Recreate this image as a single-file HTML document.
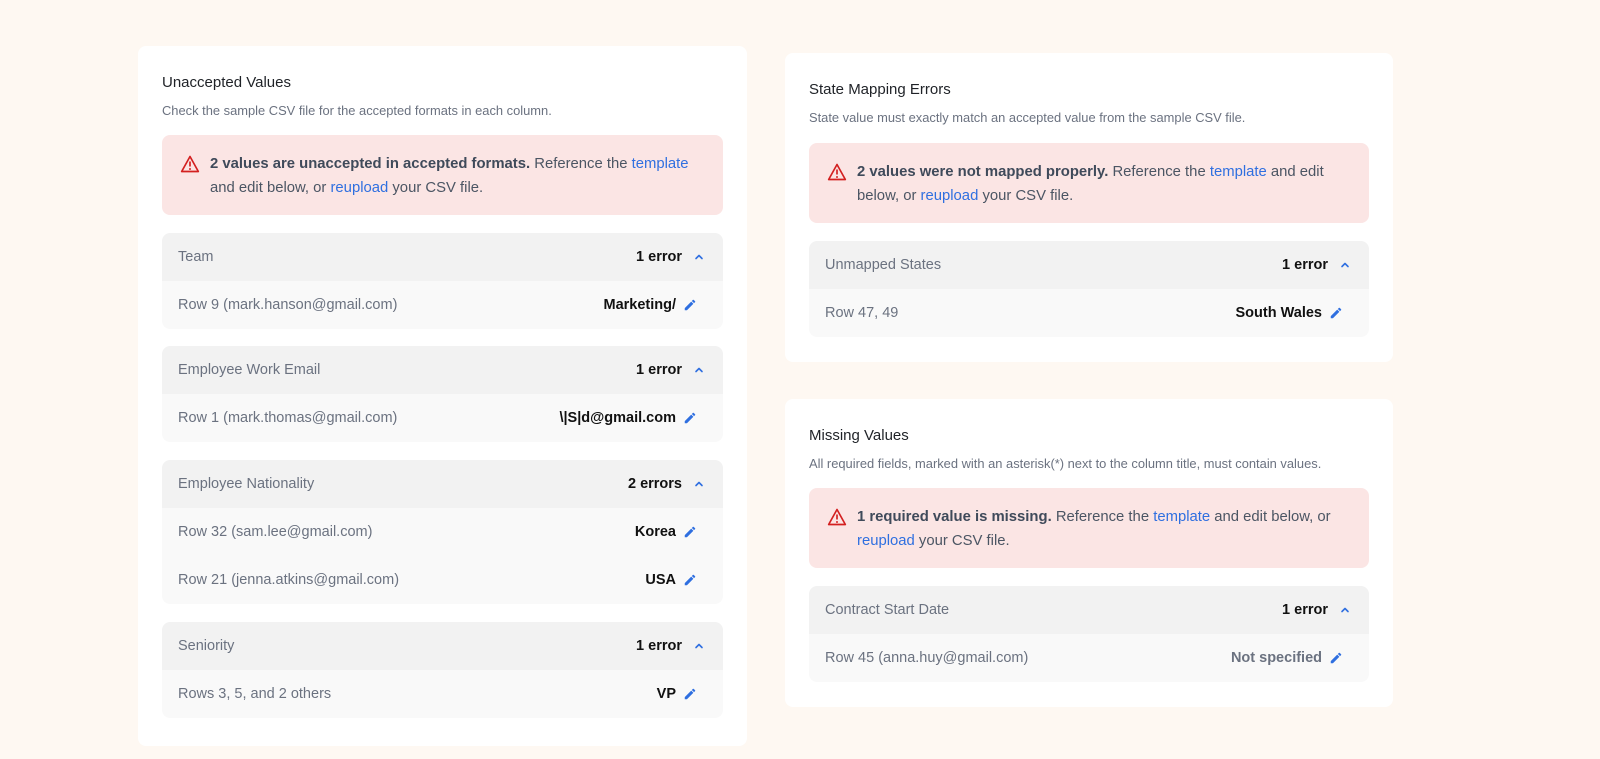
<!DOCTYPE html>
<html><head><style>
body{margin:0;background:#fef8f2;font-family:"Liberation Sans",sans-serif;width:1600px;height:759px;position:relative;overflow:hidden}
.card{position:absolute;background:#fff;border-radius:8px}
.t{position:absolute;left:24px;font-size:15px;color:#1f2227}
.s{position:absolute;left:24px;font-size:12.9px;color:#6b7280}
.al{position:absolute;left:24px;right:24px;height:80px;background:#fbe5e4;border-radius:8px;box-sizing:border-box;padding:17px 16px 0 48px;font-size:14.85px;line-height:24px;color:#4b5563}
.al b{color:#3f4a5a}
.al a{color:#2f6fe0;text-decoration:none}
.al svg{position:absolute;left:18px;top:19px}
.g{position:absolute;left:24px;right:24px;border-radius:8px;overflow:hidden}
.h,.r{height:48px;display:flex;align-items:center;padding:0 16px;font-size:14.5px;color:#6b7280}
.h{background:#f2f2f2}.r{background:#f9f9f9}
.h span,.r span{margin-left:auto;color:#111;font-weight:bold}
.ch{margin-left:12px;margin-right:3px}
.pen{margin-left:7px;margin-right:10px}
</style></head><body>
<svg width="0" height="0" style="position:absolute"><defs>
<symbol id="w" viewBox="0 0 24 24"><path d="M12 3L2 21h20L12 3z" fill="none" stroke="#d32020" stroke-width="2" stroke-linejoin="round"/><path d="M12 9v6M12 17v2" stroke="#d32020" stroke-width="2"/></symbol>
<symbol id="p" viewBox="0 0 24 24"><path d="M3 17.25V21h3.75L17.81 9.94l-3.75-3.75L3 17.25zM20.71 7.04a1 1 0 000-1.41l-2.34-2.34a1 1 0 00-1.41 0l-1.830 1.83 3.75 3.75 1.83-1.83z" fill="#2f6fe0"/></symbol>
<symbol id="c" viewBox="0 0 10 10"><path d="M2 6.5L5 3.5L8 6.5" fill="none" stroke="#2f6fe0" stroke-width="1.6" stroke-linecap="round" stroke-linejoin="round"/></symbol>
</defs></svg>

<div class="card" style="left:138px;top:46px;width:609px;height:700px">
<div class="t" style="top:28px">Unaccepted Values</div>
<div class="s" style="top:57px">Check the sample CSV file for the accepted formats in each column.</div>
<div class="al" style="top:89px"><svg width="20" height="20"><use href="#w"/></svg><b>2 values are unaccepted in accepted formats.</b> Reference the <a>template</a><br>and edit below, or <a>reupload</a> your CSV file.</div>
<div class="g" style="top:187px"><div class="h">Team<span>1 error</span><svg class="ch" width="10" height="10"><use href="#c"/></svg></div><div class="r">Row 9 (mark.hanson@gmail.com)<span>Marketing/</span><svg class="pen" width="14" height="14"><use href="#p"/></svg></div></div>
<div class="g" style="top:300px"><div class="h">Employee Work Email<span>1 error</span><svg class="ch" width="10" height="10"><use href="#c"/></svg></div><div class="r">Row 1 (mark.thomas@gmail.com)<span>\|S|d@gmail.com</span><svg class="pen" width="14" height="14"><use href="#p"/></svg></div></div>
<div class="g" style="top:414px"><div class="h">Employee Nationality<span>2 errors</span><svg class="ch" width="10" height="10"><use href="#c"/></svg></div><div class="r">Row 32 (sam.lee@gmail.com)<span>Korea</span><svg class="pen" width="14" height="14"><use href="#p"/></svg></div><div class="r">Row 21 (jenna.atkins@gmail.com)<span>USA</span><svg class="pen" width="14" height="14"><use href="#p"/></svg></div></div>
<div class="g" style="top:576px"><div class="h">Seniority<span>1 error</span><svg class="ch" width="10" height="10"><use href="#c"/></svg></div><div class="r">Rows 3, 5, and 2 others<span>VP</span><svg class="pen" width="14" height="14"><use href="#p"/></svg></div></div>
</div>

<div class="card" style="left:785px;top:53px;width:608px;height:309px">
<div class="t" style="top:28px">State Mapping Errors</div>
<div class="s" style="top:57px">State value must exactly match an accepted value from the sample CSV file.</div>
<div class="al" style="top:90px"><svg width="20" height="20"><use href="#w"/></svg><b>2 values were not mapped properly.</b> Reference the <a>template</a> and edit<br>below, or <a>reupload</a> your CSV file.</div>
<div class="g" style="top:188px"><div class="h">Unmapped States<span>1 error</span><svg class="ch" width="10" height="10"><use href="#c"/></svg></div><div class="r">Row 47, 49<span>South Wales</span><svg class="pen" width="14" height="14"><use href="#p"/></svg></div></div>
</div>

<div class="card" style="left:785px;top:399px;width:608px;height:308px">
<div class="t" style="top:28px">Missing Values</div>
<div class="s" style="top:57px">All required fields, marked with an asterisk(*) next to the column title, must contain values.</div>
<div class="al" style="top:89px"><svg width="20" height="20"><use href="#w"/></svg><b>1 required value is missing.</b> Reference the <a>template</a> and edit below, or<br><a>reupload</a> your CSV file.</div>
<div class="g" style="top:187px"><div class="h">Contract Start Date<span>1 error</span><svg class="ch" width="10" height="10"><use href="#c"/></svg></div><div class="r">Row 45 (anna.huy@gmail.com)<span style="color:#6b7280">Not specified</span><svg class="pen" width="14" height="14"><use href="#p"/></svg></div></div>
</div>
</body></html>
